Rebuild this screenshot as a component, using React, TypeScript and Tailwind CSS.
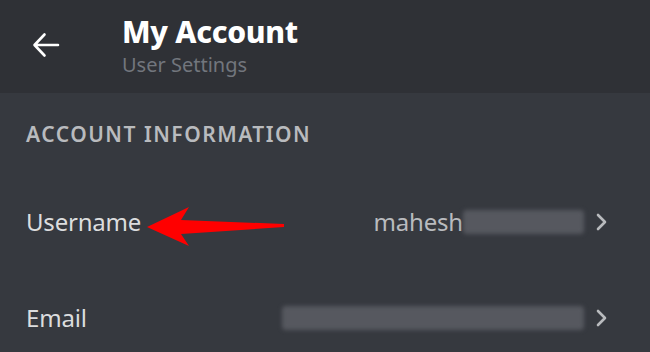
import React from 'react';

const Chevron = () => (
  <svg width="14" height="20" viewBox="0 0 14 20" fill="none" className="shrink-0">
    <path d="M3 3l7 7-7 7" stroke="#b9bbbe" strokeWidth="2.6" strokeLinecap="round" strokeLinejoin="round" />
  </svg>
);

const Blur: React.FC<{ w: string }> = ({ w }) => (
  <div className={`${w} h-[24px] rounded-sm bg-[#56585f] blur-[2px]`} />
);

export default function App() {
  return (
    <div className="w-[650px] h-[352px] overflow-hidden bg-[#36393f] font-['Noto_Sans',sans-serif] relative">
      {/* header */}
      <div className="h-[93px] bg-[#2f3136] flex items-start">
        <div className="w-[121px] pl-[32px] pt-[32px]">
          <svg width="28" height="26" viewBox="0 0 28 26" fill="none">
            <path d="M26 13H3M12.5 2.5L2.5 13L12.5 23.5" stroke="#fff" strokeWidth="2.6" strokeLinecap="round" strokeLinejoin="round" />
          </svg>
        </div>
        <div className="flex flex-col pt-[14px] pl-[1px]">
          <span className="text-[30px] leading-[36px] font-extrabold text-white tracking-[-0.3px]">My Account</span>
          <span className="mt-[3px] text-[20px] leading-[24px] text-[#72767d]">User Settings</span>
        </div>
      </div>

      {/* section */}
      <div className="pl-[26px] pt-[29px]">
        <div className="text-[21px] leading-[24px] font-semibold text-[#b9bbbe] tracking-[1.5px]">ACCOUNT INFORMATION</div>

        <div className="h-[96px] mt-[28px] flex items-center justify-between">
          <span className="text-[24px] leading-[32px] text-[#dcddde] tracking-[-0.2px]">Username</span>
          <div className="flex items-center gap-[11px] pr-[41px]">
            <div className="flex items-center">
              <span className="text-[24px] leading-[32px] text-[#b9bbbe] tracking-[-0.2px]">mahesh</span>
              <Blur w="w-[121px]" />
            </div>
            <Chevron />
          </div>
        </div>

        <div className="h-[96px] flex items-center justify-between">
          <span className="text-[24px] leading-[32px] text-[#dcddde] tracking-[-0.2px]">Email</span>
          <div className="flex items-center gap-[11px] pr-[41px]">
            <Blur w="w-[302px]" />
            <Chevron />
          </div>
        </div>
      </div>

      {/* annotation arrow */}
      <svg className="absolute left-0 top-0" width="650" height="352" viewBox="0 0 650 352">
        <polygon points="147,227 189,207 181,220 284,224 284,227 181,234 189,246" fill="#ff0000" />
      </svg>
    </div>
  );
}
